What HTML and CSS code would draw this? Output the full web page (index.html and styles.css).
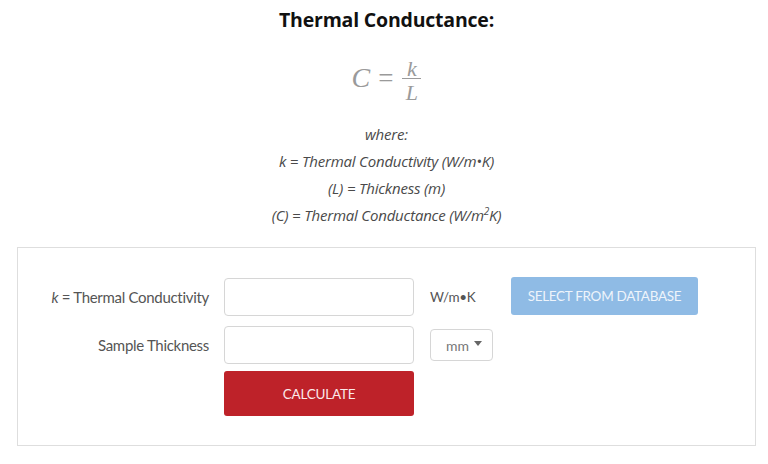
FILE: index.html
```html
<!DOCTYPE html>
<html>
<head>
<meta charset="utf-8">
<link rel="stylesheet" href="styles.css">
</head>
<body>
<div class="page">
  <h2 class="title">Thermal Conductance:</h2>
  <div class="formula">
    <span class="var big">C</span>
    <span class="eq">=</span>
    <span class="frac">
      <span class="num var">k</span>
      <span class="bar"></span>
      <span class="den var">L</span>
    </span>
  </div>
  <div class="where">
    <p>where:</p>
    <p>k = Thermal Conductivity (W/m•K)</p>
    <p>(L) = Thickness (m)</p>
    <p>(C) = Thermal Conductance (W/m<sup>2</sup>K)</p>
  </div>
  <div class="box">
    <div class="row">
      <label class="lbl"><i>k</i> = Thermal Conductivity</label>
      <div class="cell"><input class="inp" type="text"></div>
      <div class="unit">W/m•K</div>
      <button class="btn-db">SELECT FROM DATABASE</button>
    </div>
    <div class="row row2">
      <label class="lbl">Sample Thickness</label>
      <div class="cell"><input class="inp" type="text"></div>
      <div class="sel"><span>mm</span><span class="caret"></span></div>
    </div>
    <div class="row row3">
      <div class="lbl"></div>
      <button class="btn-calc">CALCULATE</button>
    </div>
  </div>
</div>
</body>
</html>
```

FILE: styles.css
```css
* { box-sizing: border-box; }
html, body { margin: 0; padding: 0; background: #fff; }
body { width: 768px; height: 464px; overflow: hidden; }
.page { padding: 0 12px 0 17px; }

.title {
  margin: 8px 0 0;
  font-family: "Open Sans", sans-serif;
  font-weight: 700;
  font-size: 19.5px;
  line-height: 24px;
  letter-spacing: -0.2px;
  color: #111;
  text-align: center;
}

.formula {
  margin-top: 26px;
  height: 46px;
  display: flex;
  justify-content: center;
  align-items: center;
  color: #9a9a9a;
  font-family: "Liberation Serif", serif;
}
.var { font-style: italic; }
.big { font-size: 28px; line-height: 30px; margin-bottom: 6px; }
.eq { font-size: 27px; line-height: 30px; margin: 0 9px 6px 8px; }
.frac { display: flex; flex-direction: column; align-items: center; }
.num, .den { font-size: 22px; line-height: 22px; }
.num { height: 20px; }
.bar { width: 19px; height: 1px; background: #9a9a9a; }
.den { margin-top: 3px; }

.where {
  margin-top: 17px;
  font-family: "Open Sans", sans-serif;
  font-style: italic;
  font-size: 15px;
  letter-spacing: -0.2px;
  color: #4a4a4a;
  text-align: center;
}
.where p { margin: 0; line-height: 27px; }
.where sup { font-size: 10px; line-height: 0; }

.box {
  margin-top: 18px;
  width: 739px;
  border: 1px solid #dedede;
  padding: 30px 0 29px;
  font-family: "Lato", sans-serif;
}
.row { display: flex; align-items: center; height: 38px; }
.row2 { margin-top: 10px; }
.row3 { margin-top: 7px; height: 45px; }
.lbl {
  width: 206px;
  flex: none;
  padding-right: 15px;
  text-align: right;
  font-size: 15px;
  color: #555;
  letter-spacing: -0.3px;
}
.cell { width: 206px; flex: none; display: flex; align-items: center; }
.inp {
  width: 190px;
  height: 38px;
  border: 1px solid #d6d6d6;
  border-radius: 4px;
  background: #fff;
  outline: none;
}
.unit {
  width: 81px;
  flex: none;
  font-size: 13.5px;
  letter-spacing: -0.3px;
  color: #555;
}
.btn-db {
  width: 187px;
  height: 38px;
  border: none;
  border-radius: 3px;
  background: #8fbbe5;
  color: #eef4fb;
  font-family: "Lato", sans-serif;
  font-size: 13.5px;
  letter-spacing: -0.3px;
  margin-top: -2px;
}
.sel {
  width: 63px;
  height: 32px;
  border: 1px solid #d6d6d6;
  border-radius: 4px;
  display: flex;
  align-items: center;
  justify-content: flex-end;
  padding-right: 10px;
  font-size: 14px;
  color: #777;
}
.caret {
  width: 0; height: 0;
  border-left: 4px solid transparent;
  border-right: 4px solid transparent;
  border-top: 5px solid #666;
  margin-left: 5px;
  margin-top: -3px;
}
.btn-calc {
  width: 190px;
  height: 45px;
  border: none;
  border-radius: 3px;
  background: #be2229;
  color: #fbe9ea;
  font-family: "Lato", sans-serif;
  font-size: 13.5px;
  letter-spacing: -0.2px;
}
```
